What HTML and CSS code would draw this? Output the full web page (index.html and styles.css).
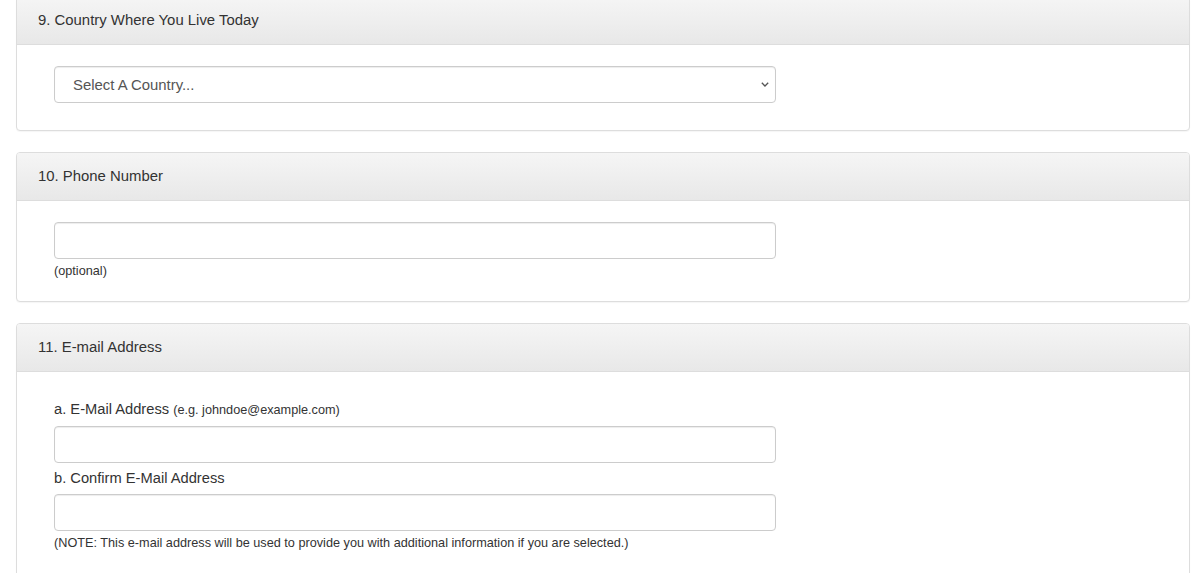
FILE: index.html
```html
<!DOCTYPE html>
<html>
<head>
<meta charset="utf-8">
<link rel="stylesheet" href="styles.css">
</head>
<body>
<div class="page">
  <section class="panel panel-first">
    <div class="panel-heading">9. Country Where You Live Today</div>
    <div class="panel-body body-country">
      <div class="select-wrap">
        <select class="form-control">
          <option>Select A Country...</option>
        </select>
        <svg class="chevron" width="8" height="5" viewBox="0 0 8 5"><path d="M0.8 0.8 L4 4 L7.2 0.8" fill="none" stroke="#555" stroke-width="1.3"/></svg>
      </div>
    </div>
  </section>

  <section class="panel">
    <div class="panel-heading">10. Phone Number</div>
    <div class="panel-body body-phone">
      <input class="form-control" type="text">
      <div class="help">(optional)</div>
    </div>
  </section>

  <section class="panel">
    <div class="panel-heading">11. E-mail Address</div>
    <div class="panel-body body-email">
      <label class="field-label">a. E-Mail Address <span class="hint">(e.g. johndoe@example.com)</span></label>
      <input class="form-control" type="text">
      <label class="field-label label-b">b. Confirm E-Mail Address</label>
      <input class="form-control" type="text">
      <div class="help note">(NOTE: This e-mail address will be used to provide you with additional information if you are selected.)</div>
    </div>
  </section>
</div>
</body>
</html>
```
FILE: styles.css
```css
html, body {
  margin: 0;
  padding: 0;
  background: #fff;
}
body {
  font-family: "Liberation Sans", Arial, sans-serif;
  color: #333;
  font-size: 14.9px;
  overflow: hidden;
}
.page {
  padding: 0 10px 0 16px;
  margin-top: -4px;
}
.panel {
  border: 1px solid #dddddd;
  border-radius: 4px;
  background: #fff;
  margin-bottom: 21px;
  box-shadow: 0 1px 1px rgba(0,0,0,0.04);
}
.panel-heading {
  background: linear-gradient(to bottom, #f5f5f5 0%, #e8e8e8 100%);
  border-bottom: 1px solid #dddddd;
  border-radius: 3px 3px 0 0;
  padding: 13px 21px 14px;
  line-height: 20px;
  font-size: 14.9px;
  color: #333;
}
.panel-body {
  padding: 21px 37px 27px;
}
.body-phone {
  padding-bottom: 21px;
}
.body-email {
  padding-top: 27px;
  padding-bottom: 30px;
}
.form-control {
  display: block;
  box-sizing: border-box;
  width: 722px;
  height: 37px;
  border: 1px solid #cccccc;
  border-radius: 4px;
  box-shadow: inset 0 1px 1px rgba(0,0,0,0.075);
  background: #fff;
  font-family: "Liberation Sans", Arial, sans-serif;
  font-size: 14.9px;
  color: #555;
  padding: 6px 18px;
  margin: 0;
  outline: none;
}
select.form-control {
  -webkit-appearance: none;
  appearance: none;
}
.select-wrap {
  position: relative;
  width: 722px;
}
.chevron {
  position: absolute;
  right: 7px;
  top: 16px;
}
.help {
  font-size: 12.7px;
  line-height: 17px;
  margin-top: 4px;
  color: #333;
}
.field-label {
  display: block;
  font-size: 14.7px;
  line-height: 20px;
  margin-bottom: 6px;
}
.hint {
  font-size: 12.7px;
}
.label-b {
  margin-top: 5px;
}
.note {
  margin-top: 4px;
}
```
